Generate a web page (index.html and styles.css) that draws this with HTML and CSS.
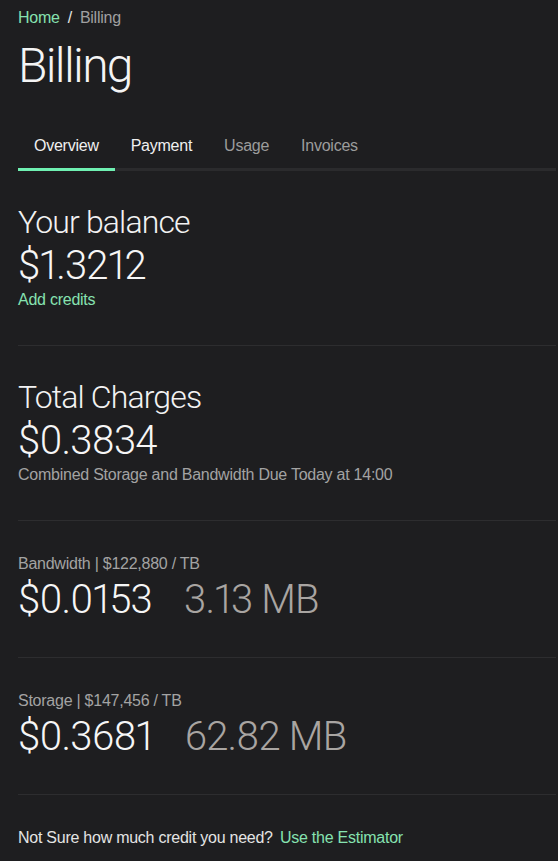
FILE: index.html
```html
<!DOCTYPE html>
<html lang="en">
<head>
<meta charset="utf-8">
<title>Billing</title>
<link rel="stylesheet" href="styles.css">
</head>
<body>
<main class="page">
  <nav class="crumbs">
    <a class="crumb-link" href="#">Home</a>
    <span class="crumb-sep">/</span>
    <span class="crumb-current">Billing</span>
  </nav>
  <h1 class="title">Billing</h1>
  <div class="tabs">
    <a class="tab active" href="#">Overview</a>
    <a class="tab bright" href="#">Payment</a>
    <a class="tab" href="#">Usage</a>
    <a class="tab" href="#">Invoices</a>
  </div>

  <section class="block">
    <h2 class="heading">Your balance</h2>
    <div class="amount">$1.3212</div>
    <a class="link small" href="#">Add credits</a>
  </section>

  <section class="block">
    <h2 class="heading">Total Charges</h2>
    <div class="amount">$0.3834</div>
    <p class="small muted">Combined Storage and Bandwidth Due Today at 14:00</p>
  </section>

  <section class="block usage">
    <p class="small muted">Bandwidth | $122,880 / TB</p>
    <div class="amount-row">
      <span class="amount-big">$0.0153</span>
      <span class="amount-big qty">3.13 MB</span>
    </div>
  </section>

  <section class="block usage">
    <p class="small muted">Storage | $147,456 / TB</p>
    <div class="amount-row">
      <span class="amount-big">$0.3681</span>
      <span class="amount-big qty">62.82 MB</span>
    </div>
  </section>

  <footer class="foot">
    <p class="small foot-text">Not Sure how much credit you need? <a class="link" href="#">Use the Estimator</a></p>
  </footer>
</main>
</body>
</html>
```

FILE: styles.css
```css
* { box-sizing: border-box; }
html, body {
  margin: 0;
  padding: 0;
  background: #1e1e20;
}
body {
  font-family: "Liberation Sans", Arial, sans-serif;
  color: #ededed;
  letter-spacing: -0.25px;
  -webkit-font-smoothing: antialiased;
}
a { text-decoration: none; }
p, h1, h2 { margin: 0; }

.page {
  padding: 6px 2px 0 18px;
  min-height: 861px;
}

.crumbs {
  display: flex;
  gap: 8px;
  font-size: 16px;
  line-height: 24px;
}
.crumb-link { color: #86e2b0; }
.crumb-sep { color: #e6e6e6; }
.crumb-current { color: #a0a0a0; }

.title,
.heading,
.amount,
.amount-big {
  font-family: Roboto, "Liberation Sans", sans-serif;
  font-weight: 300;
  letter-spacing: -0.02em;
  font-variant-numeric: proportional-nums;
}

.title {
  margin-top: 8px;
  font-size: 48px;
  line-height: 56px;
  color: #f4f4f4;
  letter-spacing: -0.035em;
}

.tabs {
  margin-top: 32px;
  display: flex;
  border-bottom: 3px solid #2b2b2d;
}
.tab {
  padding: 8px 16px 10px;
  margin-bottom: -3px;
  border-bottom: 3px solid transparent;
  font-size: 16px;
  line-height: 24px;
  color: #9c9c9c;
}
.tab.active {
  color: #f0f0f0;
  border-bottom-color: #6ff0b2;
}
.tab.bright { color: #f0f0f0; }

.block {
  padding: 31px 0 35px;
  border-bottom: 1px solid #2d2d2f;
  display: flex;
  flex-direction: column;
  align-items: flex-start;
}
.block.usage {
  padding: 33px 0 31px;
}

.heading {
  font-size: 32px;
  line-height: 40px;
  color: #f2f2f2;
  letter-spacing: -0.027em;
}
.amount {
  font-size: 40px;
  line-height: 48px;
  color: #f6f6f6;
}
.amount-row {
  display: flex;
  gap: 32px;
  line-height: 52px;
}
.amount-big {
  font-size: 40px;
  color: #f6f6f6;
}
.amount-big.qty { color: #a9a5a2; }

.small {
  font-size: 16px;
  line-height: 20px;
}
.muted { color: #a3a3a3; }
.link { color: #86e2b0; }

.foot {
  padding-top: 33px;
}
.foot-text {
  color: #e4e4e4;
}
.foot-text .link { margin-left: 3px; }
```
